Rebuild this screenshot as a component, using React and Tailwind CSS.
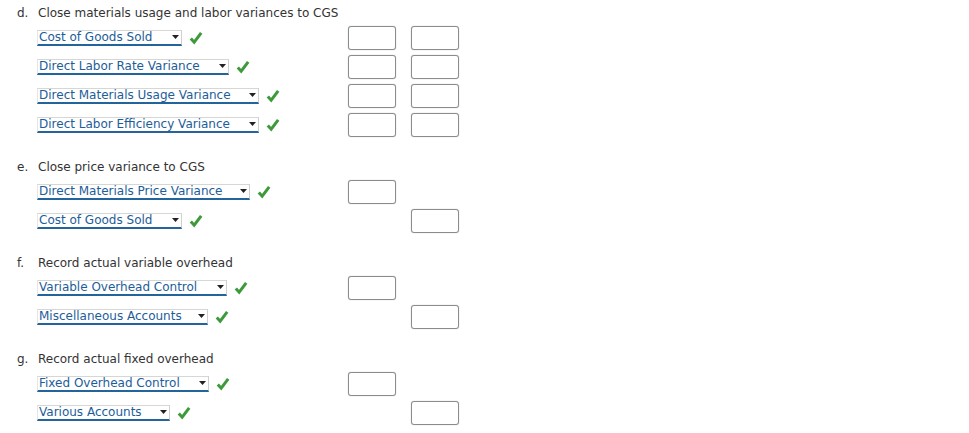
import React from "react";

const sections = [
  {
    letter: "d.",
    title: "Close materials usage and labor variances to CGS",
    rows: [
      { account: "Cost of Goods Sold", width: 145, debit: true, credit: true },
      { account: "Direct Labor Rate Variance", width: 192, debit: true, credit: true },
      { account: "Direct Materials Usage Variance", width: 222, debit: true, credit: true },
      { account: "Direct Labor Efficiency Variance", width: 222, debit: true, credit: true },
    ],
  },
  {
    letter: "e.",
    title: "Close price variance to CGS",
    rows: [
      { account: "Direct Materials Price Variance", width: 213, debit: true, credit: false },
      { account: "Cost of Goods Sold", width: 145, debit: false, credit: true },
    ],
  },
  {
    letter: "f.",
    title: "Record actual variable overhead",
    rows: [
      { account: "Variable Overhead Control", width: 190, debit: true, credit: false },
      { account: "Miscellaneous Accounts", width: 171, debit: false, credit: true },
    ],
  },
  {
    letter: "g.",
    title: "Record actual fixed overhead",
    rows: [
      { account: "Fixed Overhead Control", width: 172, debit: true, credit: false },
      { account: "Various Accounts", width: 133, debit: false, credit: true },
    ],
  },
];

function Check() {
  return (
    <svg width="14" height="14" viewBox="0 0 14 14" className="ml-[7px] shrink-0">
      <path d="M1.8 7.4 L5.2 11.2 L12.2 1.8" fill="none" stroke="#3d9a3a" strokeWidth="3" strokeLinecap="butt" strokeLinejoin="miter" />
    </svg>
  );
}

function AccountSelect({ account, width }) {
  return (
    <div
      className="flex items-center justify-between h-[16px] border-t border-l border-r border-t-[#d6d6d6] border-l-[#e6e6e6] border-r-[#cfcfcf] border-b-2 border-b-[#22649b] text-[#1d5d99] text-[12px] leading-[14px] pl-[1px] pr-[2px] bg-white"
      style={{ width }}
    >
      <span className="whitespace-nowrap">{account}</span>
      <svg width="7" height="4" viewBox="0 0 7 4">
        <path d="M0 0 L7 0 L3.5 4 Z" fill="#222" />
      </svg>
    </div>
  );
}

function AmountBox() {
  return <div className="w-[48px] h-[24px] rounded-[3px] border border-[#8c8c8c] bg-white shadow-[0_0_1px_rgba(0,0,0,0.35)]" />;
}

export default function App() {
  return (
    <main className="w-[969px] h-[433px] pt-[1px] bg-white overflow-hidden text-[12px] text-[#333]" style={{ fontFamily: '"DejaVu Sans", Verdana, sans-serif' }}>
      {sections.map((section, i) => (
        <section key={section.letter} className={i === 0 ? "" : "mt-[16px]"}>
          <div className="flex items-center h-[22px] pt-[2px] pl-[17px]">
            <span className="w-[21px]">{section.letter}</span>
            <span>{section.title}</span>
          </div>
          {section.rows.map((row) => (
            <div key={row.account + section.letter} className="flex items-center h-[29px] pl-[37px]">
              <div className="w-[311px] flex items-center">
                <AccountSelect account={row.account} width={row.width} />
                <Check />
              </div>
              <div className="w-[48px]">{row.debit && <AmountBox />}</div>
              <div className="w-[48px] ml-[15px]">{row.credit && <AmountBox />}</div>
            </div>
          ))}
        </section>
      ))}
    </main>
  );
}
